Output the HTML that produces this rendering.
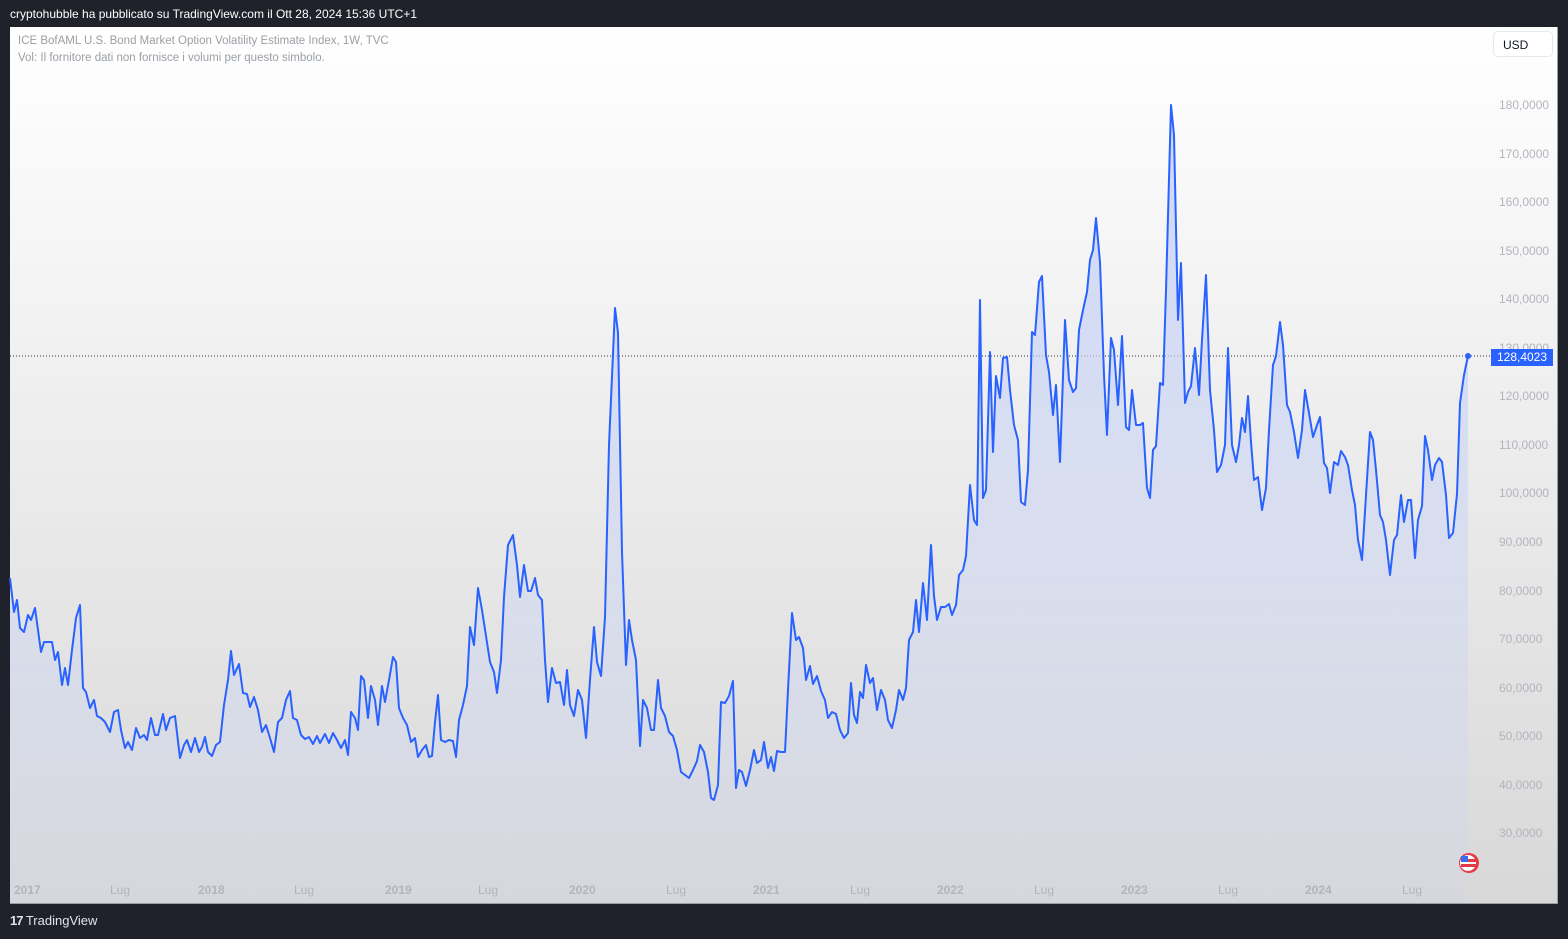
<!DOCTYPE html>
<html><head><meta charset="utf-8"><style>
body{margin:0;width:1568px;height:939px;background:#1f222b;font-family:"Liberation Sans",sans-serif;overflow:hidden;position:relative}
.hdr{position:absolute;left:10px;top:7px;color:#fff;font-size:12px}
.chart{position:absolute;left:10px;top:27px;width:1547px;height:876px;background:linear-gradient(#ffffff,#d8d8d8);border-right:1px solid #9a9ea6;border-bottom:1px solid #9a9ea6}
.leg{position:absolute;left:18px;color:#9aa0a6;font-size:11.5px}
.usd{position:absolute;left:1493px;top:31px;width:60px;height:26px;background:#fff;border:1px solid #e6e8ee;border-radius:5px;font-size:12px;color:#131722;box-sizing:border-box;padding:6px 0 0 9px}
.ax{position:absolute;left:1499px;font-size:12px;color:#b2b5be}
.tx{position:absolute;top:883px;font-size:12px;color:#b2b5be}
.tx.b{font-weight:bold}
.pl{position:absolute;left:1491px;top:349px;width:62px;height:17px;background:#2962ff;color:#fff;font-size:12px;text-align:center;line-height:17px}
.ft{position:absolute;left:10px;top:913px;color:#e0e3eb;font-size:13px}
</style></head><body>
<div class="hdr">cryptohubble ha pubblicato su TradingView.com il Ott 28, 2024 15:36 UTC+1</div>
<div class="chart"></div>
<svg style="position:absolute;left:0;top:0" width="1568" height="939">
<defs><linearGradient id="g" x1="0" y1="0" x2="0" y2="1"><stop offset="0" stop-color="#c8d3f5" stop-opacity=".9"/><stop offset="1" stop-color="#c8d3f5" stop-opacity=".15"/></linearGradient></defs>
<line x1="10" y1="356" x2="1490" y2="356" stroke="#333" stroke-width="1" stroke-dasharray="1,2"/>
<polygon fill="url(#g)" points="10,903 PTS 1468,903"/>
<polyline fill="none" stroke="#2962ff" stroke-width="2" stroke-linejoin="round" points="PTS"/>
<circle cx="1468" cy="356" r="3" fill="#2962ff"/>
<circle cx="1469" cy="863" r="10" fill="#e63946"/><circle cx="1468" cy="863" r="8" fill="#fff"/>
<rect x="1461" y="859" width="15" height="3" fill="#e63946"/><rect x="1461" y="864" width="15" height="3" fill="#e63946"/><rect x="1461" y="856" width="7" height="6" fill="#3a6df0"/>
</svg>
<div class="leg" style="top:35px">ICE BofAML U.S. Bond Market Option Volatility Estimate Index, 1W, TVC</div>
<div class="leg" style="top:52px">Vol: Il fornitore dati non fornisce i volumi per questo simbolo.</div>
<div class="usd">USD</div>
<div class="ax" style="top:98px">180,0000</div><div class="ax" style="top:147px">170,0000</div><div class="ax" style="top:195px">160,0000</div><div class="ax" style="top:244px">150,0000</div><div class="ax" style="top:292px">140,0000</div><div class="ax" style="top:341px">130,0000</div><div class="ax" style="top:389px">120,0000</div><div class="ax" style="top:438px">110,0000</div><div class="ax" style="top:486px">100,0000</div><div class="ax" style="top:535px">90,0000</div><div class="ax" style="top:584px">80,0000</div><div class="ax" style="top:632px">70,0000</div><div class="ax" style="top:681px">60,0000</div><div class="ax" style="top:729px">50,0000</div><div class="ax" style="top:778px">40,0000</div><div class="ax" style="top:826px">30,0000</div>
<div class="pl">128,4023</div>
<div class="tx b" style="left:14px">2017</div><div class="tx" style="left:110px">Lug</div><div class="tx b" style="left:198px">2018</div><div class="tx" style="left:294px">Lug</div><div class="tx b" style="left:385px">2019</div><div class="tx" style="left:478px">Lug</div><div class="tx b" style="left:569px">2020</div><div class="tx" style="left:666px">Lug</div><div class="tx b" style="left:753px">2021</div><div class="tx" style="left:850px">Lug</div><div class="tx b" style="left:937px">2022</div><div class="tx" style="left:1034px">Lug</div><div class="tx b" style="left:1121px">2023</div><div class="tx" style="left:1218px">Lug</div><div class="tx b" style="left:1305px">2024</div><div class="tx" style="left:1402px">Lug</div>
<div class="ft"><b style="letter-spacing:-1px">17</b> TradingView</div>
<script>
var P="10,578 14,612 17,600 20,628 24,632 28,615 31,620 35,608 38,630 41,652 44,642 48,642 52,642 55,660 58,652 62,685 65,668 68,685 72,650 76,618 80,605 83,688 86,692 90,708 94,700 97,716 101,718 105,722 110,732 114,712 118,710 121,730 125,748 128,742 132,750 136,728 140,738 144,735 147,740 151,718 155,735 158,735 163,714 166,730 170,718 175,716 180,758 184,745 187,740 191,752 195,738 199,752 202,747 205,737 208,752 212,756 216,745 220,742 224,705 228,680 231,651 234,675 239,664 243,693 247,694 250,707 254,697 258,710 262,732 266,725 270,738 274,752 278,722 282,718 286,700 290,691 293,718 297,720 301,735 305,739 309,737 313,744 317,736 320,743 325,734 329,743 333,733 337,740 341,748 345,740 348,755 351,712 355,718 358,730 361,676 364,680 368,718 371,686 375,700 378,725 382,686 385,702 389,680 393,657 396,662 399,708 403,718 407,725 411,742 415,738 418,757 422,750 426,745 429,757 432,756 435,722 438,695 441,740 445,742 449,740 453,741 456,757 459,720 463,705 467,686 470,627 474,645 478,588 482,610 486,636 490,662 494,672 497,693 501,660 504,597 508,545 513,535 517,565 520,597 524,565 528,591 531,591 535,578 538,595 542,600 545,660 548,702 552,668 556,683 560,682 564,705 567,670 570,705 574,716 578,690 582,700 586,738 590,680 594,627 597,662 601,676 605,617 609,445 615,308 618,333 622,552 626,665 629,620 632,640 636,660 640,746 643,700 647,708 651,730 654,730 658,680 661,708 665,716 669,732 673,736 677,750 681,772 685,775 689,778 693,770 697,761 700,745 704,752 708,772 711,798 714,800 718,785 721,702 725,703 729,696 733,681 736,788 739,770 742,772 746,786 750,770 754,750 757,763 761,760 764,742 768,768 771,757 774,771 777,751 781,752 785,752 788,690 792,613 796,640 799,637 803,648 806,680 810,666 813,684 817,676 821,691 825,700 828,718 832,712 836,714 840,730 844,738 848,733 851,683 854,715 857,723 860,692 863,698 866,665 870,683 873,678 877,710 881,690 885,700 888,720 892,728 896,710 899,690 903,700 906,688 909,640 913,632 916,600 919,632 923,583 927,620 931,545 934,596 937,620 941,607 945,607 949,604 952,615 956,605 959,575 963,570 966,556 970,485 974,520 977,525 980,300 983,498 986,490 990,352 993,452 996,376 1000,398 1003,358 1007,357 1010,390 1014,425 1018,440 1021,502 1025,505 1028,470 1032,332 1035,335 1039,282 1042,276 1046,355 1049,372 1053,415 1056,385 1060,462 1065,320 1069,380 1073,392 1076,388 1079,330 1083,310 1087,292 1090,260 1093,250 1096,218 1100,262 1104,375 1107,435 1111,338 1114,350 1118,405 1122,336 1126,427 1129,430 1132,390 1136,425 1140,425 1143,423 1147,488 1150,498 1153,450 1156,446 1160,383 1163,385 1166,290 1171,105 1174,135 1178,320 1181,263 1185,403 1188,392 1191,386 1195,348 1199,395 1202,340 1206,275 1210,390 1214,430 1217,472 1221,465 1225,445 1228,348 1232,445 1236,462 1239,445 1242,418 1245,432 1248,396 1251,442 1254,480 1258,477 1262,510 1266,488 1269,430 1273,365 1276,356 1280,322 1283,345 1287,405 1290,412 1294,432 1298,458 1302,430 1305,390 1309,413 1313,437 1317,425 1320,417 1324,463 1327,468 1330,493 1334,462 1338,465 1341,451 1345,457 1348,465 1352,490 1355,505 1358,540 1362,560 1366,495 1370,432 1373,440 1376,470 1380,515 1383,522 1386,540 1390,575 1394,540 1397,535 1401,495 1404,522 1408,500 1411,500 1415,558 1418,520 1422,506 1425,436 1428,450 1432,480 1435,465 1439,458 1442,462 1446,495 1449,538 1453,533 1457,494 1460,403 1464,375 1468,356";
document.querySelector('polyline').setAttribute('points',P);
document.querySelector('polygon').setAttribute('points','10,903 '+P+' 1468,903');
</script>
</body></html>
